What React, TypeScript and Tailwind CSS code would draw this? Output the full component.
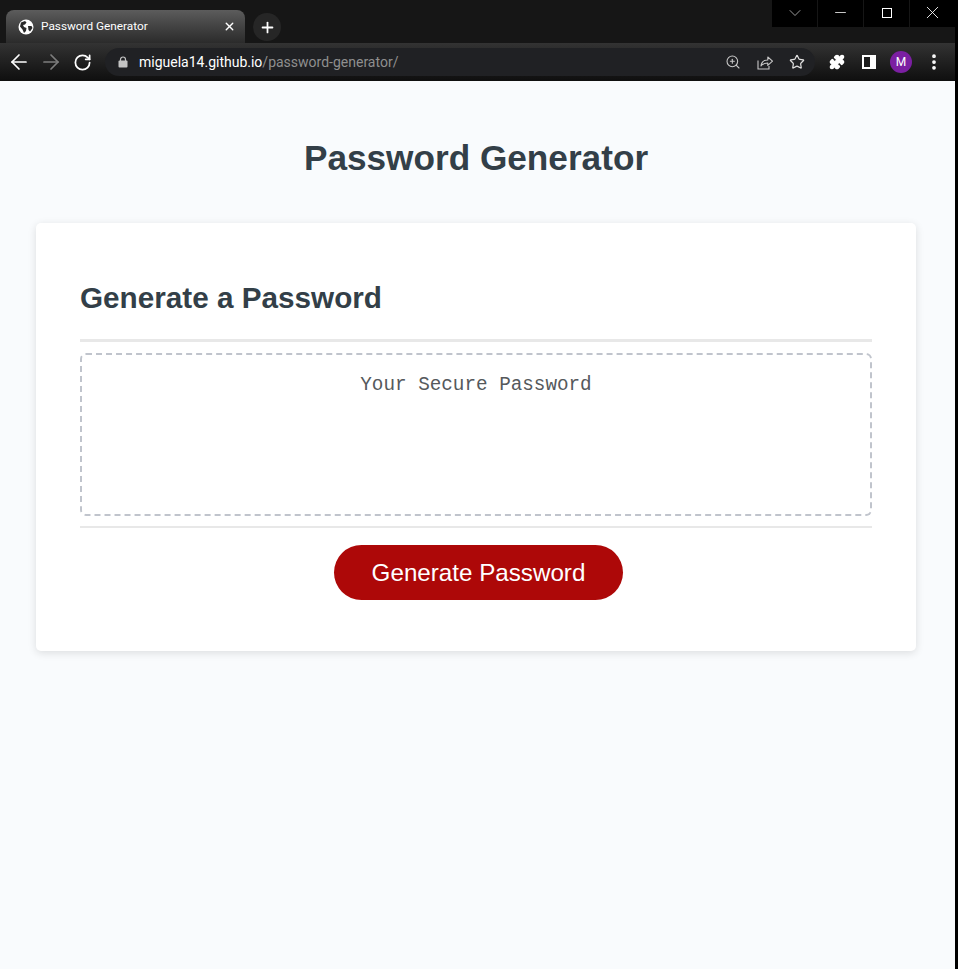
import { ArrowLeft, ArrowRight, RotateCw, ZoomIn, Star, Puzzle, X, Plus, Minus, ChevronDown, MoreVertical } from 'lucide-react';

function Globe() {
  return (
    <svg viewBox="0 0 16 16" className="w-[16px] h-[16px] shrink-0">
      <circle cx="8" cy="8" r="7.5" fill="#fff" />
      <path d="M3 3.5 L7 2 L8.5 3.5 L7 5.5 L5 6 L6 8 L8.5 9 L8 12 L6 14 L4.5 10.5 L2 7.5 Z" fill="#2a2a2a" />
      <path d="M10 7 L13.5 7 L14.5 9 L12 12.5 L10.5 11 Z" fill="#2a2a2a" />
    </svg>
  );
}

function LockIcon() {
  return (
    <svg viewBox="0 0 10 12" className="w-[10px] h-[12px] shrink-0">
      <path d="M2.5 5V3.5a2.5 2.5 0 0 1 5 0V5" fill="none" stroke="#c4c4c4" strokeWidth="1.2" />
      <rect x="0.5" y="4.5" width="9" height="7" rx="1" fill="#c4c4c4" />
    </svg>
  );
}

function ShareIcon() {
  return (
    <svg viewBox="0 0 16 16" className="w-[16px] h-[16px] shrink-0" fill="none" stroke="#c8c8c8" strokeWidth="1.1">
      <path d="M1 6.5V15h11v-3" />
      <path d="M4 12c.3-3.6 3-6 6.8-6V3l4.7 4.2-4.7 4.2V9c-3 0-5.2.8-6.8 3z" strokeLinejoin="round" />
    </svg>
  );
}

function BrowserChrome() {
  return (
    <div className="shrink-0 h-[81px] bg-black font-['Roboto','Noto_Sans',sans-serif]">
      <div className="h-[43px] bg-[#161616] flex items-end relative">
        <div className="ml-[6px] w-[239px] h-[33px] rounded-t-[8px] bg-gradient-to-b from-[#5c5c5c] to-[#2b2b2b] flex items-center pl-[12px] pr-[9px]">
          <Globe />
          <span className="ml-[7px] mt-px text-[11.8px] text-white flex-1">Password Generator</span>
          <X className="w-[13px] h-[13px] text-white" strokeWidth={2.5} />
        </div>
        <div className="ml-[8px] mb-[2px] w-[28px] h-[28px] rounded-full bg-[#262626] flex items-center justify-center">
          <Plus className="w-[17px] h-[17px] text-white" strokeWidth={2.5} />
        </div>
        <div className="absolute right-0 top-0 flex gap-px text-white">
          <div className="w-[45px] h-[27px] pb-[2px] bg-black flex items-center justify-center">
            <ChevronDown className="w-[20px] h-[20px] text-[#ccc]" strokeWidth={0.9} />
          </div>
          <div className="w-[45px] h-[27px] pb-[2px] bg-black flex items-center justify-center">
            <Minus className="w-[17px] h-[17px]" strokeWidth={1.1} />
          </div>
          <div className="w-[45px] h-[27px] pb-[2px] bg-black flex items-center justify-center">
            <div className="w-[10px] h-[10px] border border-white" />
          </div>
          <div className="w-[45px] h-[27px] pb-[2px] bg-black flex items-center justify-center">
            <X className="w-[21px] h-[21px]" strokeWidth={1} />
          </div>
        </div>
      </div>
      <div className="h-[38px] bg-gradient-to-b from-[#333] to-[#0f0f0f] flex items-center">
        <ArrowLeft className="ml-[7px] w-[24px] h-[24px] text-white" strokeWidth={1.7} />
        <ArrowRight className="ml-[8px] w-[24px] h-[24px] text-[#7d7d7d]" strokeWidth={1.7} />
        <RotateCw className="ml-[10px] w-[19px] h-[19px] text-white" strokeWidth={2.2} />
        <div className="ml-[13px] w-[710px] h-[28px] rounded-full bg-[#202124] flex items-center pl-[13px]">
          <LockIcon />
          <span className="ml-[11px] text-[14px] text-white">
            miguela14.github.io<span className="text-[#8f8f8f]">/password-generator/</span>
          </span>
          <div className="ml-auto flex items-center gap-[16px] pr-[10px]">
            <ZoomIn className="w-[16px] h-[16px] text-[#c8c8c8]" strokeWidth={1.6} />
            <ShareIcon />
            <Star className="w-[16px] h-[16px] text-[#e0e0e0]" strokeWidth={1.8} />
          </div>
        </div>
        <Puzzle className="ml-[14px] w-[16px] h-[16px] text-white" fill="#fff" />
        <div className="ml-[17px] w-[14px] h-[14px] bg-white p-[2px]">
          <div className="w-[6px] h-full bg-[#1c1c1c]" />
        </div>
        <div className="ml-[14px] w-[22px] h-[22px] rounded-full bg-[#7b1fa2] text-white text-[12px] flex items-center justify-center">M</div>
        <MoreVertical className="ml-[12px] w-[20px] h-[20px] text-white" strokeWidth={2.5} />
      </div>
    </div>
  );
}

export default function App() {
  return (
    <div className="h-[969px] bg-black pr-[3px] flex flex-col font-['Liberation_Sans',Arial,sans-serif] overflow-hidden">
      <BrowserChrome />
      <main className="flex-1 bg-[#f9fbfd] pl-[36px] pr-[39px]">
        <h1 className="mt-[56px] text-center text-[35.2px] leading-[42px] font-bold text-[hsl(206,17%,24%)]">Password Generator</h1>
        <div className="mt-[44px] h-[428px] bg-white rounded-[5px] px-[44px] pt-[57px] shadow-[0_2px_8px_rgba(0,0,0,0.12)]">
          <h2 className="text-[29.7px] leading-[36px] font-bold text-[hsl(206,17%,24%)]">Generate a Password</h2>
          <div className="mt-[23px] h-[3px] bg-[#e8e8e8]" />
          <div className="mt-[11px] h-[163px] border-2 border-dashed border-[#c0c4cc] rounded-[6px] pt-[18px] text-center font-['Liberation_Mono',monospace] text-[19.3px] leading-[24px] text-[#55595c]">
            Your Secure Password
          </div>
          <div className="mt-[10px] h-[2px] bg-[#e8e8e8]" />
          <div className="mt-[17px] flex justify-center">
            <button className="ml-[5px] w-[289px] h-[55px] pt-[2px] rounded-full bg-[#ad0808] text-white text-[24.2px]">Generate Password</button>
          </div>
        </div>
      </main>
    </div>
  );
}
